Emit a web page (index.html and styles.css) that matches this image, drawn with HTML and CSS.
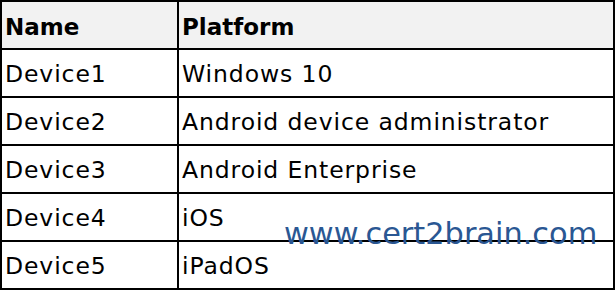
FILE: index.html
```html
<!DOCTYPE html>
<html lang="en">
<head>
<meta charset="utf-8">
<title>Devices</title>
<link rel="stylesheet" href="styles.css">
</head>
<body>
<div class="page">
  <table class="devices">
    <thead>
      <tr><th class="col-name">Name</th><th class="col-platform">Platform</th></tr>
    </thead>
    <tbody>
      <tr><td>Device1</td><td>Windows 10</td></tr>
      <tr><td>Device2</td><td>Android device administrator</td></tr>
      <tr><td>Device3</td><td>Android Enterprise</td></tr>
      <tr><td>Device4</td><td>iOS</td></tr>
      <tr><td>Device5</td><td>iPadOS</td></tr>
    </tbody>
  </table>
  <div class="watermark">www.cert2brain.com</div>
</div>
</body>
</html>
```
FILE: styles.css
```css
html, body {
  margin: 0;
  padding: 0;
  background: #ffffff;
}

.page {
  position: relative;
  width: 616px;
  height: 291px;
}

.devices {
  border-collapse: separate;
  border-spacing: 0;
  border-top: 2px solid #000;
  border-left: 2px solid #000;
  width: 615px;
  table-layout: fixed;
  font-family: "DejaVu Sans", sans-serif;
  font-size: 23.5px;
  color: #000;
}

.devices th,
.devices td {
  border-right: 2px solid #000;
  border-bottom: 2px solid #000;
  height: 46px;
  padding: 0 0 0 3px;
  text-align: left;
  vertical-align: middle;
  white-space: nowrap;
}

.devices td {
  letter-spacing: 0.9px;
  padding-top: 2px;
  height: 44px;
}

.devices th {
  background: #f2f2f2;
  font-weight: bold;
  font-size: 23px;
  padding-top: 4px;
  height: 42px;
}

.col-name {
  width: 172px;
}

.watermark {
  position: absolute;
  left: 284px;
  top: 219px;
  font-family: "DejaVu Sans", sans-serif;
  font-size: 30.4px;
  line-height: 30px;
  color: #2a5793;
  white-space: nowrap;
}
```
